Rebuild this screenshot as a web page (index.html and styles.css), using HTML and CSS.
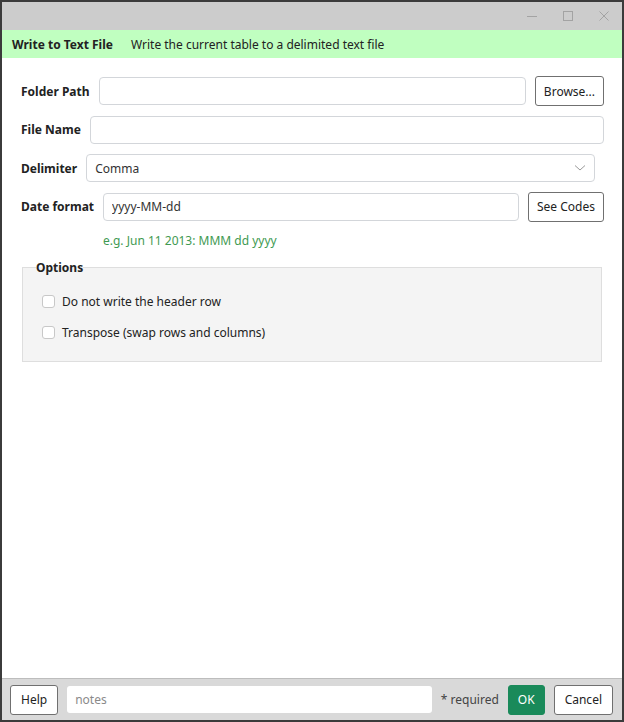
FILE: index.html
```html
<!DOCTYPE html>
<html lang="en">
<head>
    <meta charset="UTF-8">
    <meta name="viewport" content="width=device-width, initial-scale=1.0">
    <title>Write to Text File</title>
    <link rel="stylesheet" href="styles.css">
</head>
<body>
    <div class="window">
        <div class="titlebar">
            <span class="win-btn">
                <svg width="12" height="12" viewBox="0 0 12 12"><path d="M1 6.5H11" stroke="#a3a3a3" stroke-width="1"/></svg>
            </span>
            <span class="win-btn">
                <svg width="12" height="12" viewBox="0 0 12 12"><rect x="1.5" y="1.5" width="9" height="9" fill="none" stroke="#a3a3a3" stroke-width="1"/></svg>
            </span>
            <span class="win-btn">
                <svg width="12" height="12" viewBox="0 0 12 12"><path d="M1.5 1.5L10.5 10.5M10.5 1.5L1.5 10.5" stroke="#a3a3a3" stroke-width="1"/></svg>
            </span>
        </div>

        <div class="header">
            <span class="header-title">Write to Text File</span>
            <span class="header-desc">Write the current table to a delimited text file</span>
        </div>

        <div class="content">
            <div class="form-row">
                <label for="folderPath">Folder Path</label>
                <input type="text" id="folderPath" class="input-field">
                <button class="btn">Browse...</button>
            </div>
            <div class="form-row">
                <label for="fileName">File Name</label>
                <input type="text" id="fileName" class="input-field">
            </div>
            <div class="form-row">
                <label for="delimiter">Delimiter</label>
                <div class="select-field" id="delimiter">
                    <span>Comma</span>
                    <svg width="12" height="8" viewBox="0 0 12 8"><path d="M1 1.5L6 6L11 1.5" fill="none" stroke="#9a9a9a" stroke-width="1"/></svg>
                </div>
            </div>
            <div class="form-row">
                <label for="dateFormat">Date format</label>
                <input type="text" id="dateFormat" class="input-field" value="yyyy-MM-dd">
                <button class="btn">See Codes</button>
            </div>
            <div class="hint">e.g. Jun 11 2013: MMM dd yyyy</div>

            <fieldset class="options">
                <legend>Options</legend>
                <div class="check-row">
                    <span class="checkbox"></span>
                    <span>Do not write the header row</span>
                </div>
                <div class="check-row">
                    <span class="checkbox"></span>
                    <span>Transpose (swap rows and columns)</span>
                </div>
            </fieldset>
        </div>

        <div class="footer">
            <button class="btn">Help</button>
            <input type="text" class="notes" placeholder="notes">
            <span class="required">* required</span>
            <button class="btn btn-ok">OK</button>
            <button class="btn">Cancel</button>
        </div>
    </div>
</body>
</html>
```

FILE: styles.css
```css
* {
    box-sizing: border-box;
}
body {
    margin: 0;
    font-family: "Noto Sans", "Open Sans", Arial, sans-serif;
    font-size: 12px;
    color: #222;
    background-color: #3b3b3b;
}
.window {
    width: 624px;
    height: 722px;
    border: 2px solid #3b3b3b;
    background-color: white;
    display: flex;
    flex-direction: column;
}
.titlebar {
    height: 28px;
    background-color: #cccccc;
    display: flex;
    justify-content: flex-end;
    align-items: center;
}
.win-btn {
    width: 36px;
    display: flex;
    justify-content: center;
}
.header {
    height: 28px;
    background-color: #c0ffc0;
    display: flex;
    align-items: center;
    padding-left: 10px;
    gap: 18px;
}
.header-title {
    font-weight: bold;
}
.content {
    flex: 1;
    padding: 18px 18px 0 19px;
}
.form-row {
    display: flex;
    align-items: center;
    gap: 9px;
    height: 30px;
    margin-bottom: 8.5px;
}
.form-row .btn {
    padding: 0 8px;
}
label {
    font-weight: bold;
    white-space: nowrap;
}
.input-field, .select-field {
    flex: 1;
    height: 28px;
    border: 1px solid #d3d6da;
    border-radius: 4px;
    padding: 0 8px;
    font-family: inherit;
    font-size: 12px;
    color: #333;
    outline: none;
}
.select-field {
    display: flex;
    align-items: center;
    justify-content: space-between;
    margin-right: 9px;
}
.btn {
    height: 30px;
    padding: 0 10px;
    background-color: white;
    border: 1px solid #707070;
    border-radius: 3px;
    font-family: inherit;
    font-size: 12px;
    color: #222;
}
.hint {
    color: #3f9a52;
    padding-left: 82px;
    margin-top: 10px;
    line-height: 18px;
}
.options {
    margin: 9px 2px 0 1px;
    padding: 10px 19px 13px 19px;
    background-color: #f4f4f4;
    border: 1px solid #dedede;
}
.options legend {
    font-weight: bold;
    padding: 0;
    margin-left: -6px;
}
.check-row {
    display: flex;
    align-items: center;
    gap: 7px;
    height: 31px;
}
.checkbox {
    width: 13px;
    height: 13px;
    border: 1px solid #c8c8c8;
    border-radius: 3px;
    background-color: white;
}
.footer {
    height: 42px;
    background-color: #d9d9d9;
    border-top: 1px solid #bdbdbd;
    display: flex;
    align-items: center;
    gap: 9px;
    padding: 0 9px 0 8px;
}
.notes {
    flex: 1;
    height: 27px;
    border: none;
    border-radius: 3px;
    padding: 0 8px;
    font-family: inherit;
    font-size: 12px;
}
.notes::placeholder {
    color: #8a8a8a;
}
.required {
    color: #444;
}
.btn-ok {
    background-color: #1a8a5a;
    border-color: #1a8a5a;
    color: white;
    padding: 0 9px;
}
```
